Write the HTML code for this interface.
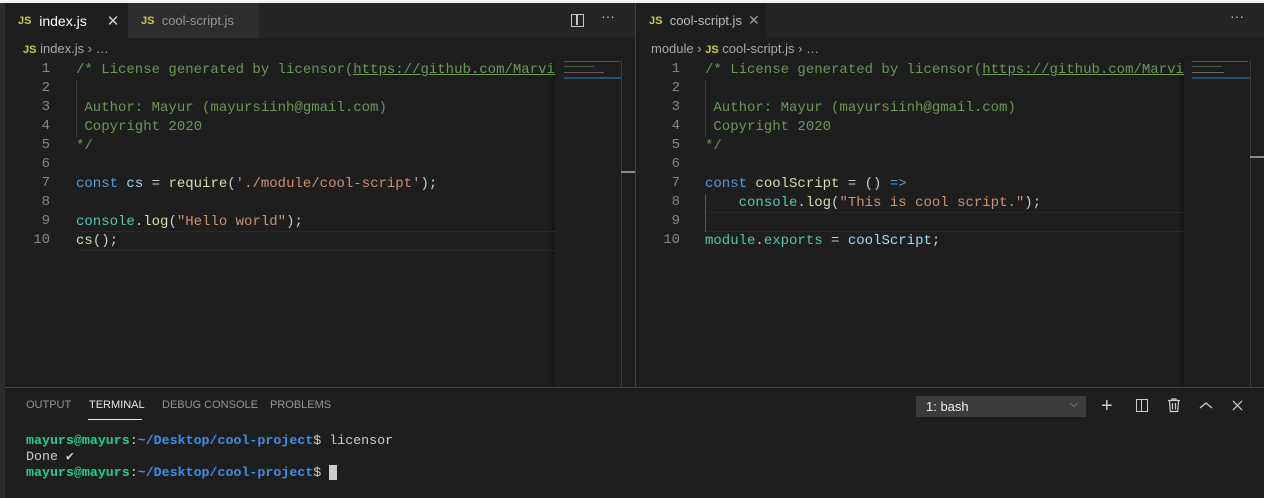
<!DOCTYPE html>
<html><head><meta charset="utf-8"><style>
*{margin:0;padding:0;box-sizing:border-box}
body{width:1264px;height:498px;background:#1e1e1e;position:relative;overflow:hidden;font-family:"Liberation Sans",sans-serif;color:#ccc}
.abs{position:absolute}
.mono{font-family:"Liberation Mono",monospace;font-size:14px;white-space:pre}
.js{color:#cbcb41;font-weight:bold;font-size:11px}
.tab{position:absolute;top:3px;height:35px;font-size:13px;display:flex;align-items:center;padding-left:13px}
.ln{position:absolute;width:30px;text-align:right;color:#858585;font-family:"Liberation Mono",monospace;font-size:14px}
.c{color:#6a9955}.k{color:#569cd6}.v{color:#9cdcfe}.f{color:#dcdcaa}.s{color:#ce9178}.t{color:#4ec9b0}
.pt{position:absolute;top:399px;font-size:11px;color:#969696}
</style></head><body>
<div class="abs" style="left:0;top:0;width:1264px;height:3px;background:#f3f3f3"></div>
<div class="abs" style="left:0;top:3px;width:5px;height:495px;background:#2c2c2c"></div>
<div class="abs" style="left:5px;top:3px;width:630px;height:35px;background:#252526"></div>
<div class="abs" style="left:636px;top:3px;width:628px;height:35px;background:#252526"></div>
<div class="tab" style="left:5px;width:123px;background:#1e1e1e;color:#fff;font-size:14px"><span class="js">JS</span>&nbsp;&nbsp;index.js<span style="margin-left:20px;color:#ccc;font-size:15px">✕</span></div>
<div class="tab" style="left:128px;width:131px;background:#2d2d2d;color:#969696"><span class="js">JS</span>&nbsp;&nbsp;cool-script.js</div>
<div class="abs" style="left:571px;top:14px;width:13px;height:13px;border:1.5px solid #c5c5c5"><div style="position:absolute;left:4px;top:0;width:1.5px;height:10px;background:#c5c5c5"></div></div>
<div class="abs" style="left:601px;top:8px;color:#c5c5c5;font-size:14px">···</div>
<div class="tab" style="left:636px;width:130px;background:#1e1e1e;color:#fff"><span class="js">JS</span>&nbsp;&nbsp;<span style="color:#bbb">cool-script.js</span><span style="margin-left:6px;color:#999;font-size:14px">✕</span></div>
<div class="abs" style="left:1230px;top:8px;color:#c5c5c5;font-size:14px">···</div>
<div class="abs" style="left:635px;top:3px;width:1px;height:385px;background:#444"></div>
<div class="abs" style="left:23px;top:41px;font-size:13px;color:#a9a9a9"><span class="js">JS</span> index.js › …</div>
<div class="abs" style="left:651px;top:41px;font-size:13px;color:#a9a9a9">module › <span class="js">JS</span> cool-script.js › …</div>
<div class="abs" style="left:555px;top:60px;width:66px;height:327px;background:#1e1e1e;box-shadow:-3px 0 4px #161616"></div>
<div class="abs" style="left:621px;top:60px;width:1px;height:327px;background:#3a3a3a"></div>
<div class="abs" style="left:621px;top:171px;width:14px;height:2px;background:#8a8a8a"></div>
<div class="abs" style="left:564px;top:61px;width:56px;height:1px;background:#4a5a44"></div>
<div class="abs" style="left:564px;top:66px;width:30px;height:1px;background:#4a5a44"></div>
<div class="abs" style="left:564px;top:72px;width:40px;height:1px;background:#6a5a66"></div>
<div class="abs" style="left:564px;top:77px;width:57px;height:2px;background:#264f78"></div>
<div class="abs" style="left:1184px;top:60px;width:66px;height:327px;background:#1e1e1e;box-shadow:-3px 0 4px #161616"></div>
<div class="abs" style="left:1250px;top:60px;width:1px;height:327px;background:#3a3a3a"></div>
<div class="abs" style="left:1250px;top:156px;width:14px;height:2px;background:#8a8a8a"></div>
<div class="abs" style="left:1192px;top:61px;width:56px;height:1px;background:#4a5a44"></div>
<div class="abs" style="left:1192px;top:66px;width:30px;height:1px;background:#4a5a44"></div>
<div class="abs" style="left:1192px;top:72px;width:32px;height:1px;background:#6a6a6a"></div>
<div class="abs" style="left:1192px;top:77px;width:58px;height:2px;background:#264f78"></div>
<div class="abs" style="left:5px;top:61px;width:550px;height:320px;overflow:hidden">
<div class="ln" style="left:15px;top:0">1</div><div class="ln" style="left:15px;top:19px">2</div><div class="ln" style="left:15px;top:38px">3</div><div class="ln" style="left:15px;top:57px">4</div><div class="ln" style="left:15px;top:76px">5</div><div class="ln" style="left:15px;top:95px">6</div><div class="ln" style="left:15px;top:114px">7</div><div class="ln" style="left:15px;top:133px">8</div><div class="ln" style="left:15px;top:152px">9</div><div class="ln" style="left:15px;top:171px">10</div>
<div class="abs" style="left:71px;top:170px;width:480px;height:20px;border-top:1px solid #282828;border-bottom:1px solid #282828"></div>
<div class="abs" style="left:71px;top:19px;width:1px;height:57px;background:#404040"></div>
<div class="abs mono" style="left:71px;top:0;line-height:19px"><span class="c">/* License generated by licensor(<u>https://github.com/Marvin</u></span>
<span class="c"></span>
<span class="c"> Author: Mayur (mayursiinh@gmail.com)</span>
<span class="c"> Copyright 2020</span>
<span class="c">*/</span>

<span class="k">const</span> <span class="v">cs</span> = <span class="f">require</span>(<span class="s">'./module/cool-script'</span>);

<span class="t">console</span>.<span class="f">log</span>(<span class="s">"Hello world"</span>);
<span class="f">cs</span>();</div>
</div>
<div class="abs" style="left:636px;top:61px;width:548px;height:320px;overflow:hidden">
<div class="ln" style="left:14px;top:0">1</div><div class="ln" style="left:14px;top:19px">2</div><div class="ln" style="left:14px;top:38px">3</div><div class="ln" style="left:14px;top:57px">4</div><div class="ln" style="left:14px;top:76px">5</div><div class="ln" style="left:14px;top:95px">6</div><div class="ln" style="left:14px;top:114px">7</div><div class="ln" style="left:14px;top:133px">8</div><div class="ln" style="left:14px;top:152px">9</div><div class="ln" style="left:14px;top:171px">10</div>
<div class="abs" style="left:69px;top:151px;width:480px;height:20px;border-top:1px solid #282828;border-bottom:1px solid #282828"></div>
<div class="abs" style="left:69px;top:19px;width:1px;height:57px;background:#404040"></div>
<div class="abs" style="left:69px;top:133px;width:1px;height:38px;background:#585858"></div>
<div class="abs mono" style="left:69px;top:0;line-height:19px"><span class="c">/* License generated by licensor(<u>https://github.com/Marvin</u></span>

<span class="c"> Author: Mayur (mayursiinh@gmail.com)</span>
<span class="c"> Copyright 2020</span>
<span class="c">*/</span>

<span class="k">const</span> <span class="f">coolScript</span> = () <span class="k">=&gt;</span>
    <span class="t">console</span>.<span class="f">log</span>(<span class="s">"This is cool script."</span>);

<span class="t">module</span>.<span class="t">exports</span> = <span class="v">coolScript</span>;</div>
</div>
<div class="abs" style="left:5px;top:387px;width:1259px;height:1px;background:#444"></div>
<div class="pt" style="left:26px">OUTPUT</div>
<div class="pt" style="left:89px;color:#e7e7e7">TERMINAL</div>
<div class="abs" style="left:88px;top:419px;width:54px;height:1px;background:#e7e7e7"></div>
<div class="pt" style="left:162px">DEBUG CONSOLE</div>
<div class="pt" style="left:270px">PROBLEMS</div>
<div class="abs" style="left:916px;top:396px;width:170px;height:21px;background:#3c3c3c;color:#f0f0f0;font-size:13px;padding:3px 0 0 10px">1: bash<span style="position:absolute;right:8px;top:2px;color:#aaa;font-size:11px">⌵</span></div>
<div class="abs" style="left:1101px;top:397px;color:#ccc;font-size:20px;line-height:18px">+</div>
<div class="abs" style="left:1136px;top:399px;width:12px;height:13px;border:1.3px solid #ccc"><div style="position:absolute;left:4px;top:0;width:1.3px;height:11px;background:#ccc"></div></div>
<svg class="abs" style="left:1166px;top:397px" width="16" height="16" viewBox="0 0 16 16" fill="none" stroke="#ccc" stroke-width="1.2"><path d="M2 3.5h12M6 3.5V2h4v1.5M3.5 3.5l.8 11h7.4l.8-11M6.5 6v6.5M9.5 6v6.5"/></svg>
<svg class="abs" style="left:1198px;top:399px" width="16" height="12" viewBox="0 0 16 12" fill="none" stroke="#ccc" stroke-width="1.3"><path d="M2 9l6-5 6 5"/></svg>
<svg class="abs" style="left:1232px;top:400px" width="11" height="11" viewBox="0 0 12 12" stroke="#ccc" stroke-width="1.3"><path d="M1 1l10 10M11 1L1 11"/></svg>
<div class="abs mono" style="left:26px;top:433px;line-height:16px;font-size:13.3px;color:#ccc"><b style="color:#23d18b">mayurs@mayurs</b>:<b style="color:#3b8eea">~/Desktop/cool-project</b>$ licensor
Done ✔
<b style="color:#23d18b">mayurs@mayurs</b>:<b style="color:#3b8eea">~/Desktop/cool-project</b>$ <span style="background:#ccc">&nbsp;</span></div>
</body></html>
